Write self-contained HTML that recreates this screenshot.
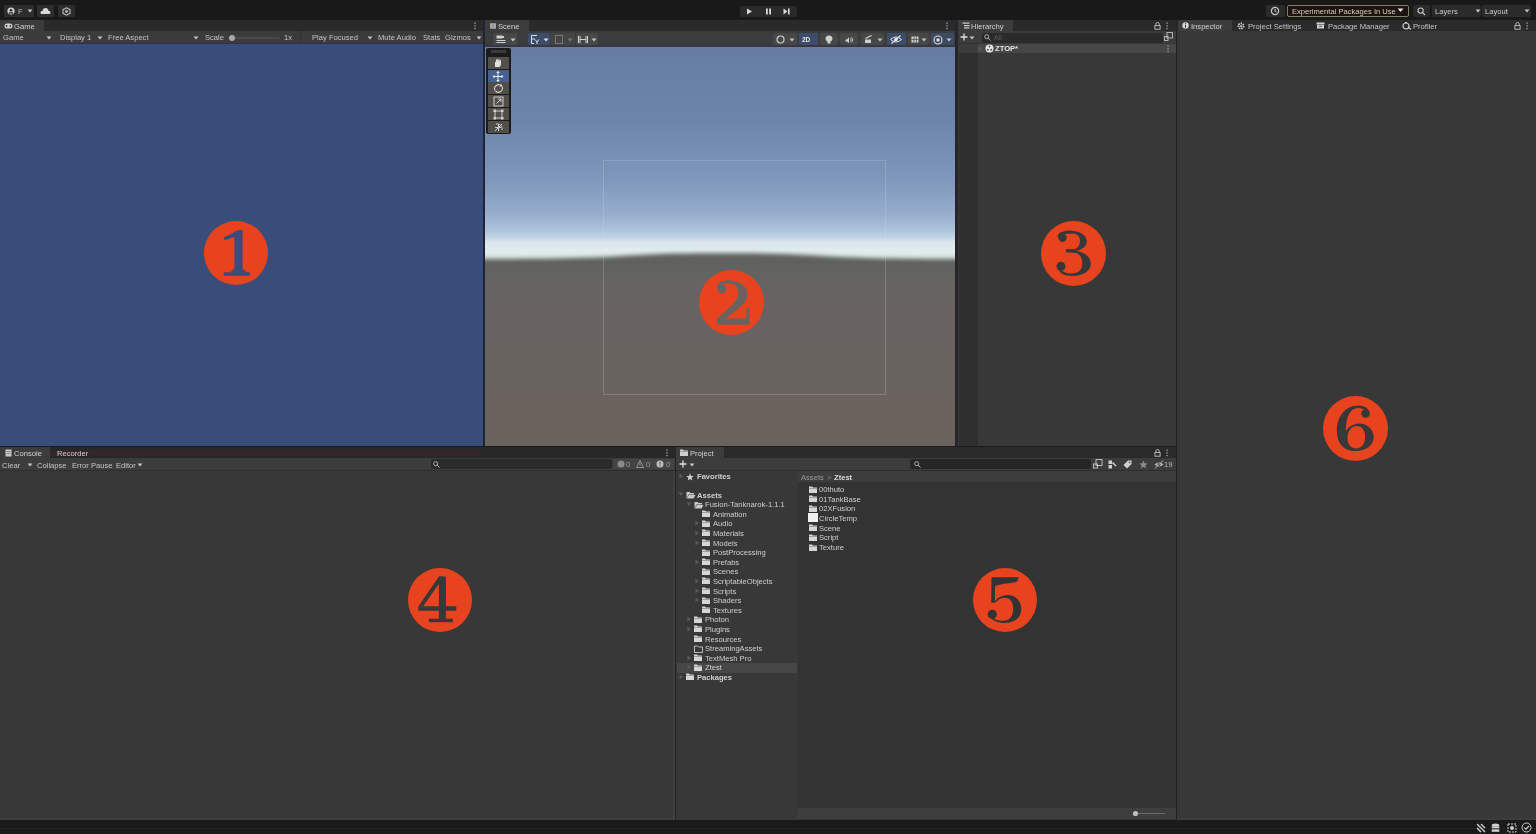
<!DOCTYPE html>
<html><head><meta charset="utf-8"><style>
*{margin:0;padding:0;box-sizing:border-box}
html,body{width:1536px;height:834px;overflow:hidden;background:#191919;font-family:"Liberation Sans",sans-serif;font-size:7.6px;color:#c4c4c4}
.a{position:absolute}
.t{position:absolute;white-space:nowrap;line-height:10px;height:10px}
svg{display:block}
#root{position:absolute;left:0;top:0;width:1536px;height:834px;overflow:hidden;will-change:transform;background:#191919}
</style></head><body><div id="root">
<div class="a" style="left:0px;top:0px;width:1536px;height:20px;background:#191919;"></div>
<div class="a" style="left:4px;top:5px;width:30px;height:12px;background:#2d2d2d;border-radius:1px"></div>
<svg class="a" style="left:7px;top:7px;" width="8" height="8" viewBox="0 0 8 8"><circle cx="4" cy="4" r="3.6" fill="#cfcfcf"/><circle cx="4" cy="3.2" r="1.3" fill="#2b2b2b"/><path d="M1.8 6.6Q4 4.6 6.2 6.6" stroke="#2b2b2b" stroke-width="1.2" fill="none"/></svg>
<div class="t" style="left:18px;top:7px;color:#bbb">F</div>
<svg class="a" style="left:27px;top:9px;" width="6" height="4" viewBox="0 0 6 4"><path d="M0.5 0.5H5.5L3 3.5Z" fill="#c4c4c4"/></svg>
<div class="a" style="left:37px;top:5px;width:17px;height:12px;background:#2d2d2d;border-radius:1px"></div>
<svg class="a" style="left:40px;top:7px;" width="11" height="8" viewBox="0 0 11 8"><path d="M1.5 7Q0.3 7 0.5 5.3Q0.8 3.8 2.5 4Q3 1 5.5 1Q8 1 8.5 3.8Q10.5 4 10.5 5.6Q10.4 7 9.2 7Z" fill="#d8d8d8"/></svg>
<div class="a" style="left:58px;top:5px;width:17px;height:12px;background:#2d2d2d;border-radius:1px"></div>
<svg class="a" style="left:62px;top:7px;" width="9" height="9" viewBox="0 0 9 9"><path d="M4.5 0.8L8 2.7V6.3L4.5 8.2L1 6.3V2.7Z" stroke="#bbb" stroke-width="1.1" fill="none"/><circle cx="4.5" cy="4.5" r="1.4" fill="#bbb"/></svg>
<div class="a" style="left:740px;top:6px;width:57px;height:11px;background:#2a2a2a;border-radius:2px"></div>
<svg class="a" style="left:745px;top:7px;" width="8" height="9" viewBox="0 0 8 9"><path d="M2 1.5L7 4.5L2 7.5Z" fill="#d8d8d8"/></svg>
<svg class="a" style="left:764px;top:7px;" width="9" height="9" viewBox="0 0 9 9"><rect x="2" y="1.5" width="1.8" height="6" fill="#d8d8d8"/><rect x="5.2" y="1.5" width="1.8" height="6" fill="#d8d8d8"/></svg>
<svg class="a" style="left:782px;top:7px;" width="9" height="9" viewBox="0 0 9 9"><path d="M1.5 1.5L5.5 4.5L1.5 7.5Z" fill="#d8d8d8"/><rect x="6" y="1.5" width="1.6" height="6" fill="#d8d8d8"/></svg>
<div class="a" style="left:1266px;top:5px;width:19px;height:12px;background:#2b2b2b;border-radius:2px"></div>
<svg class="a" style="left:1270px;top:6px;" width="10" height="10" viewBox="0 0 10 10"><circle cx="5" cy="5" r="3.6" stroke="#c8c8c8" stroke-width="1.2" fill="none"/><path d="M5 3V5.2L6.5 6" stroke="#c8c8c8" stroke-width="1" fill="none"/></svg>
<div class="a" style="left:1287px;top:5px;width:122px;height:12px;background:#1c130e;border:1px solid #857d6c;border-radius:2px"></div>
<div class="t" style="left:1292px;top:7px;color:#d8ccb8">Experimental Packages In Use</div>
<svg class="a" style="left:1397px;top:8px;" width="7" height="5" viewBox="0 0 7 5"><path d="M0.5 0.5H6.5L3.5 4Z" fill="#e6e6e6"/></svg>
<div class="a" style="left:1413px;top:5px;width:17px;height:12px;background:#2b2b2b;border-radius:2px"></div>
<svg class="a" style="left:1417px;top:7px;" width="9" height="9" viewBox="0 0 9 9"><circle cx="3.6" cy="3.6" r="2.6" stroke="#c8c8c8" stroke-width="1.1" fill="none"/><path d="M5.4 5.4L8 8" stroke="#c8c8c8" stroke-width="1.3"/></svg>
<div class="a" style="left:1432px;top:5px;width:49px;height:12px;background:#2b2b2b;border-radius:2px"></div>
<div class="t" style="left:1435px;top:7px;color:#c8c8c8">Layers</div>
<svg class="a" style="left:1475px;top:9px;" width="6" height="4" viewBox="0 0 6 4"><path d="M0.5 0.5H5.5L3 3.5Z" fill="#c4c4c4"/></svg>
<div class="a" style="left:1482px;top:5px;width:49px;height:12px;background:#2b2b2b;border-radius:2px"></div>
<div class="t" style="left:1485px;top:7px;color:#c8c8c8">Layout</div>
<svg class="a" style="left:1524px;top:9px;" width="6" height="4" viewBox="0 0 6 4"><path d="M0.5 0.5H5.5L3 3.5Z" fill="#c4c4c4"/></svg>
<div class="a" style="left:0px;top:20px;width:483px;height:11px;background:#2a2a2a;"></div>
<div class="a" style="left:0px;top:20px;width:44px;height:11px;background:#3c3c3c;"></div>
<svg class="a" style="left:4px;top:23px;" width="9" height="6" viewBox="0 0 9 6"><rect x="0.5" y="0.5" width="8" height="5" rx="2.5" fill="#cfcfcf"/><circle cx="2.6" cy="3" r="0.9" fill="#3c3c3c"/><circle cx="6.4" cy="3" r="0.9" fill="#3c3c3c"/></svg>
<div class="t" style="left:14px;top:21.5px;color:#d2d2d2">Game</div>
<svg class="a" style="left:474px;top:22px;" width="2" height="8" viewBox="0 0 2 8"><rect x="0.5" y="0.5" width="1.1" height="1.3" fill="#bdbdbd"/><rect x="0.5" y="3.2" width="1.1" height="1.3" fill="#bdbdbd"/><rect x="0.5" y="5.9" width="1.1" height="1.3" fill="#bdbdbd"/></svg>
<div class="a" style="left:0px;top:31px;width:483px;height:12px;background:#3b3b3b;"></div>
<div class="a" style="left:0px;top:43px;width:483px;height:1px;background:#2c3446;"></div>
<div class="t" style="left:3px;top:33px;">Game</div>
<svg class="a" style="left:46px;top:36px;" width="6" height="4" viewBox="0 0 6 4"><path d="M0.5 0.5H5.5L3 3.5Z" fill="#c4c4c4"/></svg>
<div class="t" style="left:60px;top:33px;">Display 1</div>
<svg class="a" style="left:97px;top:36px;" width="6" height="4" viewBox="0 0 6 4"><path d="M0.5 0.5H5.5L3 3.5Z" fill="#c4c4c4"/></svg>
<div class="t" style="left:108px;top:33px;">Free Aspect</div>
<svg class="a" style="left:193px;top:36px;" width="6" height="4" viewBox="0 0 6 4"><path d="M0.5 0.5H5.5L3 3.5Z" fill="#c4c4c4"/></svg>
<div class="t" style="left:205px;top:33px;">Scale</div>
<div class="a" style="left:232px;top:37px;width:48px;height:2px;background:#4a4a4a;border-radius:1px"></div>
<svg class="a" style="left:228px;top:34px;" width="8" height="8" viewBox="0 0 8 8"><circle cx="4" cy="4" r="3" fill="#a8a8a8"/></svg>
<div class="t" style="left:284px;top:33px;">1x</div>
<div class="a" style="left:300px;top:31px;width:1px;height:12px;background:#333;"></div>
<div class="t" style="left:312px;top:33px;">Play Focused</div>
<svg class="a" style="left:367px;top:36px;" width="6" height="4" viewBox="0 0 6 4"><path d="M0.5 0.5H5.5L3 3.5Z" fill="#c4c4c4"/></svg>
<div class="t" style="left:378px;top:33px;">Mute Audio</div>
<div class="t" style="left:423px;top:33px;">Stats</div>
<div class="t" style="left:445px;top:33px;">Gizmos</div>
<svg class="a" style="left:476px;top:36px;" width="6" height="4" viewBox="0 0 6 4"><path d="M0.5 0.5H5.5L3 3.5Z" fill="#c4c4c4"/></svg>
<div class="a" style="left:0px;top:44px;width:483px;height:401.5px;background:#3a4c7a;"></div>
<div class="a" style="left:483px;top:20px;width:2px;height:426px;background:#1f2333;"></div>
<div class="a" style="left:485px;top:20px;width:470px;height:11px;background:#2a2a2a;"></div>
<div class="a" style="left:485px;top:20px;width:44px;height:11px;background:#3c3c3c;"></div>
<svg class="a" style="left:490px;top:23px;" width="6" height="6" viewBox="0 0 6 6"><rect x="0.3" y="0.3" width="5.4" height="5.4" fill="#cfcfcf"/><rect x="1.8" y="0.5" width="0.6" height="5" fill="#3c3c3c"/><rect x="3.6" y="0.5" width="0.6" height="5" fill="#3c3c3c"/></svg>
<div class="t" style="left:498px;top:21.5px;color:#d2d2d2">Scene</div>
<svg class="a" style="left:946px;top:22px;" width="2" height="8" viewBox="0 0 2 8"><rect x="0.5" y="0.5" width="1.1" height="1.3" fill="#bdbdbd"/><rect x="0.5" y="3.2" width="1.1" height="1.3" fill="#bdbdbd"/><rect x="0.5" y="5.9" width="1.1" height="1.3" fill="#bdbdbd"/></svg>
<div class="a" style="left:485px;top:31px;width:470px;height:16px;background:#3c3c3c;"></div>
<div class="a" style="left:485px;top:44px;width:470px;height:3px;background:#38363f;"></div>
<div class="a" style="left:493px;top:33px;width:24px;height:12px;background:#484848;border-radius:1px"></div>
<svg class="a" style="left:496px;top:35px;" width="10" height="9" viewBox="0 0 10 9"><rect x="0.5" y="0.5" width="6" height="3" fill="#d0d0d0"/><rect x="0.5" y="5" width="9" height="1" fill="#d0d0d0"/><rect x="0.5" y="7" width="9" height="1" fill="#d0d0d0"/><rect x="5" y="1" width="3" height="2" fill="#d0d0d0"/></svg>
<svg class="a" style="left:510px;top:38px;" width="6" height="4" viewBox="0 0 6 4"><path d="M0.5 0.5H5.5L3 3.5Z" fill="#c4c4c4"/></svg>
<div class="a" style="left:528px;top:33px;width:22px;height:12px;background:#3c4c6a;border-radius:1px"></div>
<svg class="a" style="left:531px;top:35px;" width="9" height="9" viewBox="0 0 9 9"><path d="M0.5 0.5H6M0.5 0.5V8.5M0.5 4H4M0.5 8.5H3" stroke="#e0e0e0" stroke-width="1" fill="none"/><path d="M4 4.5L6 7V9M8 4.5L6 7" stroke="#e0e0e0" stroke-width="1" fill="none"/></svg>
<svg class="a" style="left:543px;top:38px;" width="6" height="4" viewBox="0 0 6 4"><path d="M0.5 0.5H5.5L3 3.5Z" fill="#dde"/></svg>
<div class="a" style="left:551px;top:33px;width:24px;height:12px;background:#444;border-radius:2px"></div>
<svg class="a" style="left:555px;top:35px;" width="8" height="9" viewBox="0 0 8 9"><rect x="0.5" y="0.5" width="7" height="8" stroke="#777" fill="none"/></svg>
<svg class="a" style="left:567px;top:38px;" width="6" height="4" viewBox="0 0 6 4"><path d="M0.5 0.5H5.5L3 3.5Z" fill="#777"/></svg>
<div class="a" style="left:576px;top:33px;width:22px;height:12px;background:#484848;border-radius:2px"></div>
<svg class="a" style="left:578px;top:35px;" width="10" height="9" viewBox="0 0 10 9"><path d="M0.5 1V8M9.5 1V8M2 1V8M8 1V8M2 4.5H8" stroke="#cfcfcf" stroke-width="1" fill="none"/></svg>
<svg class="a" style="left:591px;top:38px;" width="6" height="4" viewBox="0 0 6 4"><path d="M0.5 0.5H5.5L3 3.5Z" fill="#c4c4c4"/></svg>
<div class="a" style="left:773px;top:33px;width:24px;height:12px;background:#474747;border-radius:2px"></div>
<svg class="a" style="left:776px;top:35px;" width="9" height="9" viewBox="0 0 9 9"><circle cx="4.5" cy="4.5" r="3.5" stroke="#d0d0d0" stroke-width="1.2" fill="none"/></svg>
<svg class="a" style="left:789px;top:38px;" width="6" height="4" viewBox="0 0 6 4"><path d="M0.5 0.5H5.5L3 3.5Z" fill="#c4c4c4"/></svg>
<div class="a" style="left:799px;top:33px;width:19px;height:12px;background:#3c4c6a;border-radius:1px"></div>
<div class="t" style="left:802px;top:35px;font-size:6.5px;font-weight:bold;color:#e8e8e8">2D</div>
<div class="a" style="left:820px;top:33px;width:18px;height:12px;background:#474747;border-radius:2px"></div>
<svg class="a" style="left:825px;top:35px;" width="8" height="9" viewBox="0 0 8 9"><path d="M4 0.5Q7.5 0.5 7.5 4Q7.5 5.5 5.5 6.5V8.5H2.5V6.5Q0.5 5.5 0.5 4Q0.5 0.5 4 0.5Z" fill="#cfcfcf"/></svg>
<div class="a" style="left:840px;top:33px;width:18px;height:12px;background:#474747;border-radius:2px"></div>
<svg class="a" style="left:845px;top:36px;" width="9" height="7" viewBox="0 0 9 7"><path d="M0.5 3.5V5.5H2L4 7V1L2 3.5Z" fill="#cfcfcf"/><path d="M5.5 2.5Q7 4 5.5 5.5M6.5 1Q9 4 6.5 6.5" stroke="#cfcfcf" stroke-width="0.9" fill="none"/></svg>
<div class="a" style="left:861px;top:33px;width:23px;height:12px;background:#474747;border-radius:2px"></div>
<svg class="a" style="left:864px;top:35px;" width="9" height="9" viewBox="0 0 9 9"><path d="M1 4.5H7V8H1Z" fill="#cfcfcf"/><path d="M1.5 3.5L7.5 0.5" stroke="#cfcfcf" stroke-width="1.3"/></svg>
<svg class="a" style="left:877px;top:38px;" width="6" height="4" viewBox="0 0 6 4"><path d="M0.5 0.5H5.5L3 3.5Z" fill="#c4c4c4"/></svg>
<div class="a" style="left:887px;top:33px;width:19px;height:12px;background:#3c4c6a;border-radius:1px"></div>
<svg class="a" style="left:890px;top:35px;" width="12" height="9" viewBox="0 0 12 9"><path d="M0.5 4.5Q6 -0.5 11.5 4.5Q6 9.5 0.5 4.5Z" stroke="#e4e4e4" stroke-width="1" fill="none"/><circle cx="6" cy="4.5" r="1.8" fill="#e4e4e4"/><path d="M1.5 8.5L10.5 0.5" stroke="#e4e4e4" stroke-width="1.1"/></svg>
<div class="a" style="left:908px;top:33px;width:21px;height:12px;background:#474747;border-radius:2px"></div>
<svg class="a" style="left:911px;top:36px;" width="8" height="7" viewBox="0 0 8 7"><rect x="0.5" y="0.5" width="7" height="6" fill="#cfcfcf"/><rect x="2.6" y="0.5" width="0.7" height="6" fill="#474747"/><rect x="4.9" y="0.5" width="0.7" height="6" fill="#474747"/><rect x="0.5" y="3" width="7" height="0.7" fill="#474747"/></svg>
<svg class="a" style="left:921px;top:38px;" width="6" height="4" viewBox="0 0 6 4"><path d="M0.5 0.5H5.5L3 3.5Z" fill="#c4c4c4"/></svg>
<div class="a" style="left:931px;top:33px;width:23px;height:12px;background:#3c4a62;border-radius:1px"></div>
<svg class="a" style="left:933px;top:35px;" width="10" height="10" viewBox="0 0 10 10"><circle cx="5" cy="5" r="4" stroke="#e0e0e0" stroke-width="1.1" fill="none"/><circle cx="5" cy="5" r="1.7" fill="#e0e0e0"/></svg>
<svg class="a" style="left:946px;top:38px;" width="6" height="4" viewBox="0 0 6 4"><path d="M0.5 0.5H5.5L3 3.5Z" fill="#c4c4c4"/></svg>
<svg class="a" style="left:485px;top:47px;" width="470" height="399" viewBox="0 0 470 399"><defs><linearGradient id="sky" x1="0" y1="0" x2="0" y2="1"><stop offset="0.0000" stop-color="#667da1"/><stop offset="0.1830" stop-color="#6d85aa"/><stop offset="0.3333" stop-color="#7f97bb"/><stop offset="0.4211" stop-color="#97aecd"/><stop offset="0.4586" stop-color="#aec3dc"/><stop offset="0.4787" stop-color="#c4d6e6"/><stop offset="0.4887" stop-color="#dae6ec"/><stop offset="0.5088" stop-color="#e2ecef"/><stop offset="0.5238" stop-color="#dce8e4"/><stop offset="0.5589" stop-color="#c8d4d0"/></linearGradient>
<linearGradient id="gnd" gradientUnits="userSpaceOnUse" x1="0" y1="205" x2="0" y2="399"><stop offset="0" stop-color="#5e605e"/><stop offset="0.15" stop-color="#666462"/><stop offset="1" stop-color="#6b625c"/></linearGradient>
<filter id="bl" x="-0.1" y="-0.1" width="1.2" height="1.2"><feGaussianBlur stdDeviation="2"/></filter></defs>
<rect x="0" y="0" width="470" height="399" fill="url(#sky)"/>
<path d="M-10 212.11 L0 212.08 L10 212.04 L20 211.99 L30 211.93 L40 211.85 L50 211.76 L60 211.64 L70 211.49 L80 211.30 L90 211.06 L100 210.76 L110 210.39 L120 209.94 L130 209.41 L140 208.83 L150 208.22 L160 207.65 L170 207.15 L180 206.78 L190 206.53 L200 206.39 L210 206.33 L220 206.30 L230 206.30 L240 206.30 L250 206.30 L260 206.31 L270 206.36 L280 206.46 L290 206.67 L300 206.99 L310 207.44 L320 207.98 L330 208.59 L340 209.18 L350 209.74 L360 210.22 L370 210.62 L380 210.95 L390 211.21 L400 211.42 L410 211.58 L420 211.71 L430 211.82 L440 211.90 L450 211.97 L460 212.02 L470 212.06 L480 212.10 V410H-10Z" fill="url(#gnd)" filter="url(#bl)"/>
<rect x="118.5" y="113.5" width="282" height="234" stroke="#dde2ea" stroke-opacity="0.22" stroke-width="1" fill="none"/></svg>
<div class="a" style="left:486px;top:48px;width:25px;height:86px;background:#1b1b1d;border-radius:2px"></div>
<div class="a" style="left:491px;top:50px;width:15px;height:3px;background:#3a3a3a;"></div>
<div class="a" style="left:488px;top:57.0px;width:21px;height:12px;background:#54504c;"></div>
<div class="a" style="left:488px;top:69.7px;width:21px;height:12px;background:#46608f;"></div>
<div class="a" style="left:488px;top:82.4px;width:21px;height:12px;background:#524e4a;"></div>
<div class="a" style="left:488px;top:95.1px;width:21px;height:12px;background:#524e4a;"></div>
<div class="a" style="left:488px;top:107.8px;width:21px;height:12px;background:#524e4a;"></div>
<div class="a" style="left:488px;top:120.5px;width:21px;height:12px;background:#524e4a;"></div>
<svg class="a" style="left:493px;top:58px;" width="11" height="10" viewBox="0 0 11 10"><path d="M2 9V4.5Q2 3.5 3 3.5V1.5Q3.5 0.8 4 1.5V3.2Q4.5 0.3 5.3 1V3.2Q5.8 0.5 6.6 1.2V3.5Q7.2 1.5 8 2.2V6Q8 9 5.5 9Z" fill="#e0e0e0"/></svg>
<svg class="a" style="left:492px;top:71px;" width="12" height="11" viewBox="0 0 12 11"><path d="M6 0.5V10.5M1 5.5H11" stroke="#e8eefa" stroke-width="1"/><path d="M6 0L4.2 2H7.8ZM6 11L4.2 9H7.8ZM0.5 5.5L2.5 3.7V7.3ZM11.5 5.5L9.5 3.7V7.3Z" fill="#e8eefa"/></svg>
<svg class="a" style="left:493px;top:83px;" width="11" height="11" viewBox="0 0 11 11"><path d="M8.5 3A4 4 0 0 0 2 7.5M2.5 8A4 4 0 0 0 9 3.5" stroke="#cfcfcf" stroke-width="1.1" fill="none"/><path d="M8 0.5L9.5 3.5L6.5 3.5Z" fill="#cfcfcf"/></svg>
<svg class="a" style="left:493px;top:96px;" width="11" height="11" viewBox="0 0 11 11"><rect x="1" y="1" width="9" height="9" stroke="#cfcfcf" stroke-width="1" fill="none"/><path d="M3.5 7.5L8 3M5 3H8V6" stroke="#cfcfcf" stroke-width="1" fill="none"/></svg>
<svg class="a" style="left:493px;top:109px;" width="11" height="11" viewBox="0 0 11 11"><rect x="2" y="2" width="7" height="7" stroke="#cfcfcf" stroke-width="1" fill="none"/><rect x="0.5" y="0.5" width="2.5" height="2.5" fill="#cfcfcf"/><rect x="8" y="0.5" width="2.5" height="2.5" fill="#cfcfcf"/><rect x="0.5" y="8" width="2.5" height="2.5" fill="#cfcfcf"/><rect x="8" y="8" width="2.5" height="2.5" fill="#cfcfcf"/></svg>
<svg class="a" style="left:493px;top:122px;" width="11" height="11" viewBox="0 0 11 11"><path d="M2 9L9 2M2 5.5H8M5.5 2V9M3 2A5 5 0 0 1 9 8" stroke="#cfcfcf" stroke-width="1" fill="none"/></svg>
<div class="a" style="left:955px;top:20px;width:4px;height:426px;background:#28252a;"></div>
<div class="a" style="left:958px;top:20px;width:218px;height:11px;background:#2a2a2a;"></div>
<div class="a" style="left:958px;top:20px;width:55px;height:11px;background:#3c3c3c;"></div>
<svg class="a" style="left:962px;top:22px;" width="8" height="7" viewBox="0 0 8 7"><rect x="0.5" y="0.5" width="7" height="1.2" fill="#cfcfcf"/><rect x="2" y="3" width="5.5" height="1.2" fill="#cfcfcf"/><rect x="2" y="5.3" width="5.5" height="1.2" fill="#cfcfcf"/></svg>
<div class="t" style="left:971px;top:21.5px;color:#d2d2d2">Hierarchy</div>
<svg class="a" style="left:1154px;top:22px;" width="7" height="8" viewBox="0 0 7 8"><path d="M1.8 3.5V2.2A1.7 1.7 0 0 1 5.2 2.2V3.5" stroke="#c4c4c4" stroke-width="0.9" fill="none"/><rect x="0.9" y="3.6" width="5.2" height="3.6" stroke="#c4c4c4" stroke-width="0.9" fill="none"/></svg>
<svg class="a" style="left:1166px;top:22px;" width="2" height="8" viewBox="0 0 2 8"><rect x="0.5" y="0.5" width="1.1" height="1.3" fill="#bdbdbd"/><rect x="0.5" y="3.2" width="1.1" height="1.3" fill="#bdbdbd"/><rect x="0.5" y="5.9" width="1.1" height="1.3" fill="#bdbdbd"/></svg>
<div class="a" style="left:958px;top:31px;width:218px;height:12px;background:#3c3c3c;"></div>
<svg class="a" style="left:960px;top:33px;" width="8" height="8" viewBox="0 0 8 8"><path d="M4 0.5V7.5M0.5 4H7.5" stroke="#e0e0e0" stroke-width="1.3"/></svg>
<svg class="a" style="left:969px;top:36px;" width="6" height="4" viewBox="0 0 6 4"><path d="M0.5 0.5H5.5L3 3.5Z" fill="#c4c4c4"/></svg>
<div class="a" style="left:982px;top:33px;width:181px;height:10px;background:#2a2a2a;border-radius:2px"></div>
<svg class="a" style="left:984px;top:34px;" width="7" height="7" viewBox="0 0 7 7"><circle cx="2.7" cy="2.7" r="2" stroke="#bbb" stroke-width="0.9" fill="none"/><path d="M4.2 4.2L6.5 6.5" stroke="#bbb" stroke-width="1"/></svg>
<div class="t" style="left:994px;top:33px;color:#5a5a5a;font-size:7px">All</div>
<svg class="a" style="left:1164px;top:32px;" width="9" height="9" viewBox="0 0 9 9"><rect x="3" y="0.5" width="5.5" height="5.5" stroke="#bdbdbd" stroke-width="0.9" fill="none"/><rect x="0.5" y="4.5" width="3.5" height="4" stroke="#bdbdbd" stroke-width="0.9" fill="none"/></svg>
<div class="a" style="left:958px;top:43px;width:218px;height:403px;background:#383838;"></div>
<div class="a" style="left:959px;top:43px;width:19px;height:403px;background:#2f2f2f;"></div>
<div class="a" style="left:958px;top:44px;width:218px;height:9px;background:#474747;"></div>
<div class="a" style="left:958px;top:44px;width:20px;height:9px;background:#3c3c3c;"></div>
<svg class="a" style="left:978px;top:46px;" width="5" height="6" viewBox="0 0 5 6"><path d="M0.5 0.5L4 3L0.5 5.5Z" fill="#5a5a5a"/></svg>
<svg class="a" style="left:985px;top:44px;" width="9" height="9" viewBox="0 0 9 9"><circle cx="4.5" cy="4.5" r="4" fill="#e8e8e8"/><circle cx="4.5" cy="2.6" r="1" fill="#555"/><circle cx="2.8" cy="5.8" r="1" fill="#555"/><circle cx="6.2" cy="5.8" r="1" fill="#555"/></svg>
<div class="t" style="left:995px;top:44px;color:#e6e6e6;font-weight:bold">ZTOP*</div>
<svg class="a" style="left:1167px;top:45px;" width="2" height="8" viewBox="0 0 2 8"><rect x="0.5" y="0.5" width="1.1" height="1.3" fill="#aaa"/><rect x="0.5" y="3.2" width="1.1" height="1.3" fill="#aaa"/><rect x="0.5" y="5.9" width="1.1" height="1.3" fill="#aaa"/></svg>
<div class="a" style="left:1176px;top:20px;width:1px;height:800px;background:#232323;"></div>
<div class="a" style="left:1177px;top:20px;width:359px;height:11px;background:#2a2a2a;"></div>
<div class="a" style="left:1178px;top:20px;width:54px;height:11px;background:#3c3c3c;"></div>
<svg class="a" style="left:1182px;top:22px;" width="7" height="7" viewBox="0 0 7 7"><circle cx="3.5" cy="3.5" r="3.2" fill="#d6d6d6"/><rect x="3" y="1.2" width="1" height="1" fill="#3c3c3c"/><rect x="3" y="2.8" width="1" height="3" fill="#3c3c3c"/></svg>
<div class="t" style="left:1191px;top:22px;color:#d2d2d2">Inspector</div>
<svg class="a" style="left:1237px;top:22px;" width="8" height="8" viewBox="0 0 8 8"><circle cx="4" cy="4" r="2.6" stroke="#cfcfcf" stroke-width="1.8" fill="none" stroke-dasharray="1.4 0.9"/><circle cx="4" cy="4" r="1" fill="#cfcfcf"/></svg>
<div class="t" style="left:1248px;top:22px;">Project Settings</div>
<svg class="a" style="left:1316px;top:22px;" width="9" height="7" viewBox="0 0 9 7"><rect x="0.5" y="0.5" width="8" height="2" fill="#cfcfcf"/><rect x="1" y="3" width="7" height="3.5" fill="#cfcfcf"/><rect x="3" y="3.8" width="3" height="0.8" fill="#3a3a3a"/></svg>
<div class="t" style="left:1328px;top:22px;">Package Manager</div>
<svg class="a" style="left:1402px;top:21px;" width="10" height="9" viewBox="0 0 10 9"><circle cx="4" cy="5" r="3" stroke="#cfcfcf" stroke-width="1.2" fill="none"/><rect x="3" y="1" width="2" height="1" fill="#cfcfcf"/><path d="M7 6.5L9 8.5" stroke="#cfcfcf" stroke-width="1.1"/></svg>
<div class="t" style="left:1413px;top:22px;">Profiler</div>
<svg class="a" style="left:1514px;top:22px;" width="7" height="8" viewBox="0 0 7 8"><path d="M1.8 3.5V2.2A1.7 1.7 0 0 1 5.2 2.2V3.5" stroke="#c4c4c4" stroke-width="0.9" fill="none"/><rect x="0.9" y="3.6" width="5.2" height="3.6" stroke="#c4c4c4" stroke-width="0.9" fill="none"/></svg>
<svg class="a" style="left:1526px;top:22px;" width="2" height="8" viewBox="0 0 2 8"><rect x="0.5" y="0.5" width="1.1" height="1.3" fill="#bdbdbd"/><rect x="0.5" y="3.2" width="1.1" height="1.3" fill="#bdbdbd"/><rect x="0.5" y="5.9" width="1.1" height="1.3" fill="#bdbdbd"/></svg>
<div class="a" style="left:1177px;top:31px;width:359px;height:789px;background:#383838;"></div>
<div class="a" style="left:0px;top:446px;width:1176px;height:1px;background:#1c1c1c;"></div>
<div class="a" style="left:0px;top:447px;width:675px;height:11px;background:#282828;"></div>
<div class="a" style="left:50px;top:450.5px;width:430px;height:5.5px;background:#33272b;"></div>
<div class="a" style="left:0px;top:447px;width:50px;height:11px;background:#3c3c3c;"></div>
<svg class="a" style="left:5px;top:449px;" width="7" height="8" viewBox="0 0 7 8"><rect x="0.5" y="0.5" width="6" height="7" fill="#c8c8c8"/><rect x="1.5" y="2" width="4" height="0.8" fill="#7a7a7a"/><rect x="1.5" y="4" width="4" height="0.8" fill="#7a7a7a"/></svg>
<div class="t" style="left:14px;top:449px;color:#d2d2d2">Console</div>
<div class="t" style="left:57px;top:449px;color:#dcc8cc">Recorder</div>
<svg class="a" style="left:666px;top:449px;" width="2" height="8" viewBox="0 0 2 8"><rect x="0.5" y="0.5" width="1.1" height="1.3" fill="#bdbdbd"/><rect x="0.5" y="3.2" width="1.1" height="1.3" fill="#bdbdbd"/><rect x="0.5" y="5.9" width="1.1" height="1.3" fill="#bdbdbd"/></svg>
<div class="a" style="left:0px;top:458px;width:675px;height:12px;background:#3c3c3c;"></div>
<div class="t" style="left:2px;top:461px;">Clear</div>
<svg class="a" style="left:27px;top:463px;" width="6" height="4" viewBox="0 0 6 4"><path d="M0.5 0.5H5.5L3 3.5Z" fill="#c4c4c4"/></svg>
<div class="t" style="left:37px;top:461px;">Collapse</div>
<div class="t" style="left:72px;top:461px;">Error Pause</div>
<div class="t" style="left:116px;top:461px;">Editor</div>
<svg class="a" style="left:137px;top:463px;" width="6" height="4" viewBox="0 0 6 4"><path d="M0.5 0.5H5.5L3 3.5Z" fill="#c4c4c4"/></svg>
<div class="a" style="left:431px;top:459px;width:181px;height:10px;background:#2a2a2a;border-radius:3px"></div>
<svg class="a" style="left:433px;top:461px;" width="7" height="7" viewBox="0 0 7 7"><circle cx="2.7" cy="2.7" r="2" stroke="#bbb" stroke-width="0.9" fill="none"/><path d="M4.2 4.2L6.5 6.5" stroke="#bbb" stroke-width="1"/></svg>
<div class="a" style="left:614px;top:459px;width:60px;height:10px;background:#444;"></div>
<svg class="a" style="left:617px;top:460px;" width="8" height="8" viewBox="0 0 8 8"><circle cx="4" cy="4" r="3.5" fill="#8a8a8a"/></svg>
<div class="t" style="left:626px;top:460px;color:#9a9a9a">0</div>
<svg class="a" style="left:636px;top:460px;" width="8" height="8" viewBox="0 0 8 8"><path d="M4 0.5L7.5 7.5H0.5Z" stroke="#9a9a9a" stroke-width="0.9" fill="none"/><rect x="3.6" y="3" width="0.8" height="2.5" fill="#9a9a9a"/></svg>
<div class="t" style="left:646px;top:460px;color:#9a9a9a">0</div>
<svg class="a" style="left:656px;top:460px;" width="8" height="8" viewBox="0 0 8 8"><circle cx="4" cy="4" r="3.5" fill="#bdbdbd"/><rect x="3.5" y="1.8" width="1" height="2.8" fill="#444"/><rect x="3.5" y="5.3" width="1" height="1" fill="#444"/></svg>
<div class="t" style="left:666px;top:460px;color:#9a9a9a">0</div>
<div class="a" style="left:0px;top:471px;width:675px;height:349px;background:#383838;"></div>
<div class="a" style="left:0px;top:470px;width:675px;height:1px;background:#2e2e2e;"></div>
<div class="a" style="left:675px;top:447px;width:1px;height:373px;background:#1f1f1f;"></div>
<div class="a" style="left:676px;top:447px;width:500px;height:11px;background:#2a2a2a;"></div>
<div class="a" style="left:676px;top:447px;width:48px;height:11px;background:#3c3c3c;"></div>
<svg class="a" style="left:680px;top:449px;" width="8" height="7" viewBox="0 0 8 7"><path d="M0 0.5H3L4 1.5H8V7H0Z" fill="#d0d0d0"/><rect x="0" y="2" width="8" height="0.6" fill="#7a7a7a"/></svg>
<div class="t" style="left:690px;top:449px;color:#d2d2d2">Project</div>
<svg class="a" style="left:1154px;top:449px;" width="7" height="8" viewBox="0 0 7 8"><path d="M1.8 3.5V2.2A1.7 1.7 0 0 1 5.2 2.2V3.5" stroke="#c4c4c4" stroke-width="0.9" fill="none"/><rect x="0.9" y="3.6" width="5.2" height="3.6" stroke="#c4c4c4" stroke-width="0.9" fill="none"/></svg>
<svg class="a" style="left:1166px;top:449px;" width="2" height="8" viewBox="0 0 2 8"><rect x="0.5" y="0.5" width="1.1" height="1.3" fill="#bdbdbd"/><rect x="0.5" y="3.2" width="1.1" height="1.3" fill="#bdbdbd"/><rect x="0.5" y="5.9" width="1.1" height="1.3" fill="#bdbdbd"/></svg>
<div class="a" style="left:676px;top:458px;width:500px;height:12px;background:#3c3c3c;"></div>
<svg class="a" style="left:679px;top:460px;" width="8" height="8" viewBox="0 0 8 8"><path d="M4 0.5V7.5M0.5 4H7.5" stroke="#e0e0e0" stroke-width="1.3"/></svg>
<svg class="a" style="left:689px;top:463px;" width="6" height="4" viewBox="0 0 6 4"><path d="M0.5 0.5H5.5L3 3.5Z" fill="#c4c4c4"/></svg>
<div class="a" style="left:910px;top:459px;width:181px;height:10px;background:#262626;border-radius:2px"></div>
<svg class="a" style="left:914px;top:461px;" width="7" height="7" viewBox="0 0 7 7"><circle cx="2.7" cy="2.7" r="2" stroke="#bbb" stroke-width="0.9" fill="none"/><path d="M4.2 4.2L6.5 6.5" stroke="#bbb" stroke-width="1"/></svg>
<svg class="a" style="left:1093px;top:459px;" width="10" height="10" viewBox="0 0 10 10"><rect x="3" y="0.5" width="6" height="6" stroke="#c8c8c8" stroke-width="0.9" fill="none"/><rect x="0.5" y="5" width="4" height="4" stroke="#c8c8c8" stroke-width="0.9" fill="none"/></svg>
<svg class="a" style="left:1108px;top:460px;" width="9" height="9" viewBox="0 0 9 9"><rect x="0.5" y="0.5" width="3.5" height="3.5" fill="#d0d0d0"/><rect x="0.5" y="5" width="3.5" height="3.5" fill="#d0d0d0"/><path d="M4.5 2.5L8 6" stroke="#d0d0d0" stroke-width="1.5"/></svg>
<svg class="a" style="left:1123px;top:460px;" width="9" height="9" viewBox="0 0 9 9"><path d="M0.5 5L5 0.5H8.5V4L4 8.5Z" fill="#d0d0d0"/><circle cx="6.5" cy="2.5" r="0.8" fill="#3c3c3c"/></svg>
<svg class="a" style="left:1139px;top:460px;" width="9" height="9" viewBox="0 0 9 9"><path d="M4.5 0.5L5.7 3.3L8.5 3.5L6.4 5.4L7 8.4L4.5 6.8L2 8.4L2.6 5.4L0.5 3.5L3.3 3.3Z" fill="#8a8a8a"/></svg>
<svg class="a" style="left:1154px;top:460px;" width="10" height="9" viewBox="0 0 10 9"><path d="M0.5 4.5Q5 0.5 9.5 4.5Q5 8.5 0.5 4.5Z" fill="#b8b8b8"/><circle cx="5" cy="4.5" r="1.5" fill="#3c3c3c"/><path d="M1 8.5L9 0.5" stroke="#b8b8b8" stroke-width="1"/></svg>
<div class="t" style="left:1164px;top:460px;color:#b8b8b8">19</div>
<div class="a" style="left:676px;top:470px;width:500px;height:350px;background:#333333;"></div>
<div class="a" style="left:676px;top:470px;width:122px;height:350px;background:#383838;"></div>
<div class="a" style="left:676px;top:470px;width:500px;height:1px;background:#2e2e2e;"></div>
<div class="a" style="left:798px;top:471px;width:378px;height:11px;background:#3d3d3d;"></div>
<div class="t" style="left:801px;top:473px;color:#9a9a9a">Assets</div>
<div class="t" style="left:827px;top:473px;color:#8a8a8a">&gt;</div>
<div class="t" style="left:834px;top:473px;color:#d8d8d8;font-weight:bold">Ztest</div>
<div class="a" style="left:677px;top:662.5px;width:120px;height:10px;background:#474747;"></div>
<svg class="a" style="left:679px;top:473px;" width="5" height="6" viewBox="0 0 5 6"><path d="M0.5 0.5L4 3L0.5 5.5Z" fill="#5a5a5a"/></svg>
<svg class="a" style="left:686px;top:472.5px;" width="8" height="8" viewBox="0 0 8 8"><path d="M4 0.3L5 2.9L7.7 3L5.6 4.8L6.3 7.5L4 6L1.7 7.5L2.4 4.8L0.3 3L3 2.9Z" fill="#d0d0d0"/></svg>
<div class="t" style="left:697px;top:472px;color:#cfcfcf;font-weight:bold">Favorites</div>
<svg class="a" style="left:678px;top:492.1px;" width="6" height="5" viewBox="0 0 6 5"><path d="M0.5 0.5H5.5L3 4Z" fill="#5a5a5a"/></svg>
<svg class="a" style="left:686px;top:491.1px;" width="10" height="8" viewBox="0 0 10 8"><path d="M0.5 1H3.5L4.5 2H8V3.5H2.5L0.5 7.5Z" fill="#c8c8c8"/><path d="M2.8 4H9.5L7.5 7.5H0.8Z" fill="#c8c8c8"/></svg>
<div class="t" style="left:697px;top:491px;color:#cfcfcf;font-weight:bold">Assets</div>
<svg class="a" style="left:686px;top:501.6px;" width="6" height="5" viewBox="0 0 6 5"><path d="M0.5 0.5H5.5L3 4Z" fill="#5a5a5a"/></svg>
<svg class="a" style="left:694px;top:500.6px;" width="10" height="8" viewBox="0 0 10 8"><path d="M0.5 1H3.5L4.5 2H8V3.5H2.5L0.5 7.5Z" fill="#c8c8c8"/><path d="M2.8 4H9.5L7.5 7.5H0.8Z" fill="#c8c8c8"/></svg>
<div class="t" style="left:705px;top:500px;color:#cfcfcf">Fusion-Tanknarok-1.1.1</div>
<svg class="a" style="left:702px;top:510.20000000000005px;" width="8" height="7" viewBox="0 0 8 7"><path d="M0 0.5H3L4 1.5H8V7H0Z" fill="#d6d6d6"/><rect x="0" y="2" width="8" height="0.6" fill="#7a7a7a"/></svg>
<div class="t" style="left:713px;top:510px;color:#cfcfcf">Animation</div>
<svg class="a" style="left:695px;top:520.3000000000001px;" width="5" height="6" viewBox="0 0 5 6"><path d="M0.5 0.5L4 3L0.5 5.5Z" fill="#5a5a5a"/></svg>
<svg class="a" style="left:702px;top:519.8000000000001px;" width="8" height="7" viewBox="0 0 8 7"><path d="M0 0.5H3L4 1.5H8V7H0Z" fill="#d6d6d6"/><rect x="0" y="2" width="8" height="0.6" fill="#7a7a7a"/></svg>
<div class="t" style="left:713px;top:519px;color:#cfcfcf">Audio</div>
<svg class="a" style="left:695px;top:529.9px;" width="5" height="6" viewBox="0 0 5 6"><path d="M0.5 0.5L4 3L0.5 5.5Z" fill="#5a5a5a"/></svg>
<svg class="a" style="left:702px;top:529.4px;" width="8" height="7" viewBox="0 0 8 7"><path d="M0 0.5H3L4 1.5H8V7H0Z" fill="#d6d6d6"/><rect x="0" y="2" width="8" height="0.6" fill="#7a7a7a"/></svg>
<div class="t" style="left:713px;top:529px;color:#cfcfcf">Materials</div>
<svg class="a" style="left:695px;top:539.5px;" width="5" height="6" viewBox="0 0 5 6"><path d="M0.5 0.5L4 3L0.5 5.5Z" fill="#5a5a5a"/></svg>
<svg class="a" style="left:702px;top:539.0px;" width="8" height="7" viewBox="0 0 8 7"><path d="M0 0.5H3L4 1.5H8V7H0Z" fill="#d6d6d6"/><rect x="0" y="2" width="8" height="0.6" fill="#7a7a7a"/></svg>
<div class="t" style="left:713px;top:539px;color:#cfcfcf">Models</div>
<svg class="a" style="left:702px;top:548.6px;" width="8" height="7" viewBox="0 0 8 7"><path d="M0 0.5H3L4 1.5H8V7H0Z" fill="#d6d6d6"/><rect x="0" y="2" width="8" height="0.6" fill="#7a7a7a"/></svg>
<div class="t" style="left:713px;top:548px;color:#cfcfcf">PostProcessing</div>
<svg class="a" style="left:695px;top:558.7px;" width="5" height="6" viewBox="0 0 5 6"><path d="M0.5 0.5L4 3L0.5 5.5Z" fill="#5a5a5a"/></svg>
<svg class="a" style="left:702px;top:558.2px;" width="8" height="7" viewBox="0 0 8 7"><path d="M0 0.5H3L4 1.5H8V7H0Z" fill="#d6d6d6"/><rect x="0" y="2" width="8" height="0.6" fill="#7a7a7a"/></svg>
<div class="t" style="left:713px;top:558px;color:#cfcfcf">Prefabs</div>
<svg class="a" style="left:702px;top:567.8000000000001px;" width="8" height="7" viewBox="0 0 8 7"><path d="M0 0.5H3L4 1.5H8V7H0Z" fill="#d6d6d6"/><rect x="0" y="2" width="8" height="0.6" fill="#7a7a7a"/></svg>
<div class="t" style="left:713px;top:567px;color:#cfcfcf">Scenes</div>
<svg class="a" style="left:695px;top:577.9px;" width="5" height="6" viewBox="0 0 5 6"><path d="M0.5 0.5L4 3L0.5 5.5Z" fill="#5a5a5a"/></svg>
<svg class="a" style="left:702px;top:577.4px;" width="8" height="7" viewBox="0 0 8 7"><path d="M0 0.5H3L4 1.5H8V7H0Z" fill="#d6d6d6"/><rect x="0" y="2" width="8" height="0.6" fill="#7a7a7a"/></svg>
<div class="t" style="left:713px;top:577px;color:#cfcfcf">ScriptableObjects</div>
<svg class="a" style="left:695px;top:587.5px;" width="5" height="6" viewBox="0 0 5 6"><path d="M0.5 0.5L4 3L0.5 5.5Z" fill="#5a5a5a"/></svg>
<svg class="a" style="left:702px;top:587.0px;" width="8" height="7" viewBox="0 0 8 7"><path d="M0 0.5H3L4 1.5H8V7H0Z" fill="#d6d6d6"/><rect x="0" y="2" width="8" height="0.6" fill="#7a7a7a"/></svg>
<div class="t" style="left:713px;top:587px;color:#cfcfcf">Scripts</div>
<svg class="a" style="left:695px;top:597.1px;" width="5" height="6" viewBox="0 0 5 6"><path d="M0.5 0.5L4 3L0.5 5.5Z" fill="#5a5a5a"/></svg>
<svg class="a" style="left:702px;top:596.6px;" width="8" height="7" viewBox="0 0 8 7"><path d="M0 0.5H3L4 1.5H8V7H0Z" fill="#d6d6d6"/><rect x="0" y="2" width="8" height="0.6" fill="#7a7a7a"/></svg>
<div class="t" style="left:713px;top:596px;color:#cfcfcf">Shaders</div>
<svg class="a" style="left:702px;top:606.2px;" width="8" height="7" viewBox="0 0 8 7"><path d="M0 0.5H3L4 1.5H8V7H0Z" fill="#d6d6d6"/><rect x="0" y="2" width="8" height="0.6" fill="#7a7a7a"/></svg>
<div class="t" style="left:713px;top:606px;color:#cfcfcf">Textures</div>
<svg class="a" style="left:687px;top:616.3px;" width="5" height="6" viewBox="0 0 5 6"><path d="M0.5 0.5L4 3L0.5 5.5Z" fill="#5a5a5a"/></svg>
<svg class="a" style="left:694px;top:615.8px;" width="8" height="7" viewBox="0 0 8 7"><path d="M0 0.5H3L4 1.5H8V7H0Z" fill="#d6d6d6"/><rect x="0" y="2" width="8" height="0.6" fill="#7a7a7a"/></svg>
<div class="t" style="left:705px;top:615px;color:#cfcfcf">Photon</div>
<svg class="a" style="left:687px;top:625.9px;" width="5" height="6" viewBox="0 0 5 6"><path d="M0.5 0.5L4 3L0.5 5.5Z" fill="#5a5a5a"/></svg>
<svg class="a" style="left:694px;top:625.4px;" width="8" height="7" viewBox="0 0 8 7"><path d="M0 0.5H3L4 1.5H8V7H0Z" fill="#d6d6d6"/><rect x="0" y="2" width="8" height="0.6" fill="#7a7a7a"/></svg>
<div class="t" style="left:705px;top:625px;color:#cfcfcf">Plugins</div>
<svg class="a" style="left:694px;top:635.0px;" width="8" height="7" viewBox="0 0 8 7"><path d="M0 0.5H3L4 1.5H8V7H0Z" fill="#d6d6d6"/><rect x="0" y="2" width="8" height="0.6" fill="#7a7a7a"/></svg>
<div class="t" style="left:705px;top:635px;color:#cfcfcf">Resources</div>
<svg class="a" style="left:694px;top:644.6px;" width="9" height="8" viewBox="0 0 9 8"><path d="M0.5 1H3.5L4.5 2H8.5V7.5H0.5Z" stroke="#c8c8c8" stroke-width="0.9" fill="none"/></svg>
<div class="t" style="left:705px;top:644px;color:#cfcfcf">StreamingAssets</div>
<svg class="a" style="left:687px;top:654.7px;" width="5" height="6" viewBox="0 0 5 6"><path d="M0.5 0.5L4 3L0.5 5.5Z" fill="#5a5a5a"/></svg>
<svg class="a" style="left:694px;top:654.2px;" width="8" height="7" viewBox="0 0 8 7"><path d="M0 0.5H3L4 1.5H8V7H0Z" fill="#d6d6d6"/><rect x="0" y="2" width="8" height="0.6" fill="#7a7a7a"/></svg>
<div class="t" style="left:705px;top:654px;color:#cfcfcf">TextMesh Pro</div>
<svg class="a" style="left:687px;top:664.3px;" width="5" height="6" viewBox="0 0 5 6"><path d="M0.5 0.5L4 3L0.5 5.5Z" fill="#5a5a5a"/></svg>
<svg class="a" style="left:694px;top:663.8px;" width="8" height="7" viewBox="0 0 8 7"><path d="M0 0.5H3L4 1.5H8V7H0Z" fill="#d6d6d6"/><rect x="0" y="2" width="8" height="0.6" fill="#7a7a7a"/></svg>
<div class="t" style="left:705px;top:663px;color:#cfcfcf">Ztest</div>
<svg class="a" style="left:679px;top:673.9px;" width="5" height="6" viewBox="0 0 5 6"><path d="M0.5 0.5L4 3L0.5 5.5Z" fill="#5a5a5a"/></svg>
<svg class="a" style="left:686px;top:673.4px;" width="8" height="7" viewBox="0 0 8 7"><path d="M0 0.5H3L4 1.5H8V7H0Z" fill="#d6d6d6"/><rect x="0" y="2" width="8" height="0.6" fill="#7a7a7a"/></svg>
<div class="t" style="left:697px;top:673px;color:#cfcfcf;font-weight:bold">Packages</div>
<svg class="a" style="left:809px;top:485.5px;" width="8" height="7" viewBox="0 0 8 7"><path d="M0 0.5H3L4 1.5H8V7H0Z" fill="#d6d6d6"/><rect x="0" y="2" width="8" height="0.6" fill="#7a7a7a"/></svg>
<div class="t" style="left:819px;top:485px;color:#cfcfcf">00thuto</div>
<svg class="a" style="left:809px;top:495.17px;" width="8" height="7" viewBox="0 0 8 7"><path d="M0 0.5H3L4 1.5H8V7H0Z" fill="#d6d6d6"/><rect x="0" y="2" width="8" height="0.6" fill="#7a7a7a"/></svg>
<div class="t" style="left:819px;top:495px;color:#cfcfcf">01TankBase</div>
<svg class="a" style="left:809px;top:504.84px;" width="8" height="7" viewBox="0 0 8 7"><path d="M0 0.5H3L4 1.5H8V7H0Z" fill="#d6d6d6"/><rect x="0" y="2" width="8" height="0.6" fill="#7a7a7a"/></svg>
<div class="t" style="left:819px;top:504px;color:#cfcfcf">02XFusion</div>
<div class="a" style="left:808px;top:513.01px;width:10px;height:9px;background:#f0f0f0;"></div>
<div class="t" style="left:819px;top:514px;color:#cfcfcf">CircleTemp</div>
<svg class="a" style="left:809px;top:524.18px;" width="8" height="7" viewBox="0 0 8 7"><path d="M0 0.5H3L4 1.5H8V7H0Z" fill="#d6d6d6"/><rect x="0" y="2" width="8" height="0.6" fill="#7a7a7a"/></svg>
<div class="t" style="left:819px;top:524px;color:#cfcfcf">Scene</div>
<svg class="a" style="left:809px;top:533.85px;" width="8" height="7" viewBox="0 0 8 7"><path d="M0 0.5H3L4 1.5H8V7H0Z" fill="#d6d6d6"/><rect x="0" y="2" width="8" height="0.6" fill="#7a7a7a"/></svg>
<div class="t" style="left:819px;top:533px;color:#cfcfcf">Script</div>
<svg class="a" style="left:809px;top:543.52px;" width="8" height="7" viewBox="0 0 8 7"><path d="M0 0.5H3L4 1.5H8V7H0Z" fill="#d6d6d6"/><rect x="0" y="2" width="8" height="0.6" fill="#7a7a7a"/></svg>
<div class="t" style="left:819px;top:543px;color:#cfcfcf">Texture</div>
<div class="a" style="left:798px;top:808px;width:378px;height:11px;background:#3e3e3e;"></div>
<div class="a" style="left:1135px;top:813px;width:30px;height:1px;background:#6a6a6a;"></div>
<svg class="a" style="left:1132px;top:810px;" width="7" height="7" viewBox="0 0 7 7"><circle cx="3.5" cy="3.5" r="2.6" fill="#bdbdbd"/></svg>
<div class="a" style="left:0px;top:818px;width:675px;height:2px;background:#3e3e3e;"></div>
<div class="a" style="left:673px;top:471px;width:2px;height:347px;background:#3f3f3f;"></div>
<div class="a" style="left:675px;top:447px;width:1px;height:373px;background:#232323;"></div>
<div class="a" style="left:1177px;top:818px;width:359px;height:2px;background:#3c3c3c;"></div>
<div class="a" style="left:0px;top:820px;width:1536px;height:14px;background:#1a1a1a;"></div>
<div class="a" style="left:0px;top:828px;width:1536px;height:1px;background:#222222;"></div>
<svg class="a" style="left:1476px;top:823px;" width="10" height="10" viewBox="0 0 10 10"><path d="M1 1L9 9M1 5L5 9M5 1L9 5" stroke="#d0d0d0" stroke-width="1.4"/></svg>
<svg class="a" style="left:1491px;top:823px;" width="9" height="10" viewBox="0 0 9 10"><ellipse cx="4.5" cy="2" rx="3.8" ry="1.6" fill="#d0d0d0"/><rect x="0.7" y="3.3" width="7.6" height="2" fill="#d0d0d0"/><rect x="0.7" y="6.3" width="7.6" height="2.5" fill="#d0d0d0"/></svg>
<svg class="a" style="left:1507px;top:823px;" width="10" height="10" viewBox="0 0 10 10"><rect x="1" y="1" width="8" height="8" stroke="#cfcfcf" stroke-width="1" fill="none" stroke-dasharray="2 1"/><circle cx="5" cy="5" r="2" fill="#cfcfcf"/></svg>
<svg class="a" style="left:1521px;top:822px;" width="11" height="11" viewBox="0 0 11 11"><circle cx="5.5" cy="5.5" r="4.5" stroke="#cfcfcf" stroke-width="1" fill="none"/><path d="M3.3 5.6L5 7.2L7.8 4" stroke="#cfcfcf" stroke-width="1.2" fill="none"/></svg>
<svg class="a" style="left:202px;top:219px" width="68" height="68" viewBox="0 0 68 68"><defs><mask id="m1"><rect width="68" height="68" fill="#fff"/><g transform="translate(-202,-219)" fill="#000"><path d="M234.4 231.5L238.5 230.2H242.6V273H234.4Z"/><path d="M238.5 230.2L242.6 230.2L242.6 234.2L224.8 240.2L223.6 237.4Z"/><path d="M223.8 272.3H249.8V275.7H223.8Z"/><path d="M230 272.5L234.4 268.5V272.5ZM242.6 268.5L247 272.5H242.6Z"/></g></mask></defs><circle cx="34.0" cy="34.0" r="32" fill="#e6431e" mask="url(#m1)"/></svg>
<svg class="a" style="left:697.0px;top:268.0px" width="69.0" height="69.0" viewBox="0 0 69.0 69.0"><defs><mask id="m2"><rect width="69.0" height="69.0" fill="#fff"/><g transform="translate(-697.0,-268.0)" fill="#000"><circle cx="722" cy="288.8" r="4.4"/><path d="M718.3 287.5C719.5 283.3 724.5 281.6 730.5 281.6" fill="none" stroke="#000" stroke-width="3" stroke-linecap="round"/><path d="M729 280.8C740 280.8 747.5 286.3 747.5 294C747.5 301 742.5 305.5 735.5 310.8L720 322.5L717.6 318.3L730.5 306.5C735.5 301.5 738.2 297.5 738.2 292.5C738.2 287 735 283.6 729 283.6Z"/><path d="M717 318.6H749.2V324.5H717Z"/><path d="M745.3 324.5H749.3L749.6 307.5H747Z"/></g></mask></defs><circle cx="34.5" cy="34.5" r="32.5" fill="#e6431e" mask="url(#m2)"/></svg>
<svg class="a" style="left:1039.0px;top:218.5px" width="69.0" height="69.0" viewBox="0 0 69.0 69.0"><defs><mask id="m3"><rect width="69.0" height="69.0" fill="#fff"/><g transform="translate(-1039.0,-218.5)" fill="#000"><circle cx="1062.5" cy="237.2" r="4.2"/><path d="M1059 235.5C1061 232 1066 231.6 1071 231.6" fill="none" stroke="#000" stroke-width="3" stroke-linecap="round"/><path d="M1070 230.2C1080.5 230.2 1086.8 235 1086.8 241C1086.8 246 1082 249.5 1074 250.8L1073.5 249.5C1077.5 247.8 1080 245 1080 240.5C1080 235.5 1077 232.8 1070 232.8Z"/><path d="M1066 248.6H1075.5V252H1066Z"/><path d="M1072 250C1084 250.5 1090.8 256 1090.8 263C1090.8 270.5 1083.5 275.4 1072 275.4C1065 275.4 1060 273 1058 268.5L1060.5 268C1062.5 271.5 1066 273 1071 273C1078.5 273 1082.3 269.5 1082.3 262.5C1082.3 255.5 1078.5 252 1072 252Z"/><circle cx="1061" cy="265.7" r="4.5"/></g></mask></defs><circle cx="34.5" cy="34.5" r="32.5" fill="#e6431e" mask="url(#m3)"/></svg>
<svg class="a" style="left:405.5px;top:566px" width="68" height="68" viewBox="0 0 68 68"><defs><mask id="m4"><rect width="68" height="68" fill="#fff"/><g transform="translate(-405.5,-566)" fill="#000"><path d="M438.4 576.6H445.4V620H438.4Z"/><path d="M438.4 576.6H443.5L422.5 606.5H417.8Z"/><path d="M417.8 606.2H455.8V610.7H417.8Z"/><path d="M428.3 618.7H452.3V622.2H428.3Z"/></g></mask></defs><circle cx="34.0" cy="34.0" r="32" fill="#e6431e" mask="url(#m4)"/></svg>
<svg class="a" style="left:971px;top:566px" width="68" height="68" viewBox="0 0 68 68"><defs><mask id="m5"><rect width="68" height="68" fill="#fff"/><g transform="translate(-971,-566)" fill="#000"><path d="M993 577.2H1018.8L1017 581.8C1012 583.2 1000 583.8 995 586.2Z"/><path d="M991.5 577.2H995.2L994.8 602.8H991.2Z"/><path d="M994.5 601.5C998.5 597 1003 595 1007.5 595C1016 595 1021.3 601.5 1021.3 609C1021.3 617.5 1015 623 1005 623C998 623 992 620.5 989.5 616L991.5 615.5C993.5 619 997.5 620.8 1003 620.8C1009.5 620.8 1013.2 616.5 1013.2 609C1013.2 601.5 1009.5 597.8 1005 597.8C1001 597.8 998 599.5 995.8 602.5Z"/><circle cx="992.3" cy="614.3" r="4.6"/></g></mask></defs><circle cx="34.0" cy="34.0" r="32" fill="#e6431e" mask="url(#m5)"/></svg>
<svg class="a" style="left:1320.5px;top:393.5px" width="69.0" height="69.0" viewBox="0 0 69.0 69.0"><defs><mask id="m6"><rect width="69.0" height="69.0" fill="#fff"/><g transform="translate(-1320.5,-393.5)" fill="#000"><circle cx="1365.1" cy="413" r="4.3"/><path d="M1368.8 411.5C1367.5 407 1363 405 1357.5 405C1345 405 1336.3 416 1336.3 430C1336.3 443.5 1343.5 450.6 1355 450.6L1355 448.3C1349 448.3 1345.3 442 1345.3 430C1345.3 416 1350 407.4 1357.5 407.4C1361.5 407.4 1364.5 409 1366.5 412Z"/><path fill-rule="evenodd" d="M1355 450.6C1366 450.6 1373.2 444.5 1373.2 436.5C1373.2 428.5 1366.5 423 1358.5 423C1352.5 423 1347.5 426.5 1344.5 432L1344.5 440C1345 446.5 1349 450.6 1355 450.6ZM1355.5 447.9C1361 447.9 1364.6 443.5 1364.6 436.5C1364.6 429.5 1361 425.6 1356.5 425.6C1350.5 425.6 1347 431 1347 437.5C1347 443.5 1350 447.9 1355.5 447.9Z"/></g></mask></defs><circle cx="34.5" cy="34.5" r="32.5" fill="#e6431e" mask="url(#m6)"/></svg>
</div></body></html>
